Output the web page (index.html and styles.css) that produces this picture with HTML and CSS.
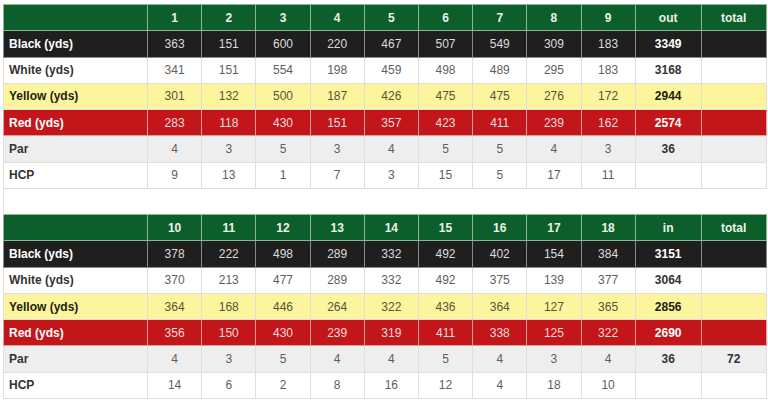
FILE: index.html
```html
<!DOCTYPE html>
<html>
<head>
<meta charset="utf-8">
<link rel="stylesheet" href="styles.css">
</head>
<body>
<table class="card">
<colgroup>
<col class="c-label"><col class="c-hole"><col class="c-hole"><col class="c-hole"><col class="c-hole"><col class="c-hole"><col class="c-hole"><col class="c-hole"><col class="c-hole"><col class="c-hole"><col class="c-sum"><col class="c-total">
</colgroup>
<tbody>
<tr class="head"><td></td><td>1</td><td>2</td><td>3</td><td>4</td><td>5</td><td>6</td><td>7</td><td>8</td><td>9</td><td>out</td><td>total</td></tr>
<tr class="black"><td>Black (yds)</td><td>363</td><td>151</td><td>600</td><td>220</td><td>467</td><td>507</td><td>549</td><td>309</td><td>183</td><td class="sum">3349</td><td></td></tr>
<tr class="white"><td>White (yds)</td><td>341</td><td>151</td><td>554</td><td>198</td><td>459</td><td>498</td><td>489</td><td>295</td><td>183</td><td class="sum">3168</td><td></td></tr>
<tr class="yellow"><td>Yellow (yds)</td><td>301</td><td>132</td><td>500</td><td>187</td><td>426</td><td>475</td><td>475</td><td>276</td><td>172</td><td class="sum">2944</td><td></td></tr>
<tr class="red"><td>Red (yds)</td><td>283</td><td>118</td><td>430</td><td>151</td><td>357</td><td>423</td><td>411</td><td>239</td><td>162</td><td class="sum">2574</td><td></td></tr>
<tr class="par"><td>Par</td><td>4</td><td>3</td><td>5</td><td>3</td><td>4</td><td>5</td><td>5</td><td>4</td><td>3</td><td class="sum">36</td><td></td></tr>
<tr class="hcp"><td>HCP</td><td>9</td><td>13</td><td>1</td><td>7</td><td>3</td><td>15</td><td>5</td><td>17</td><td>11</td><td></td><td></td></tr>
<tr class="gap"><td colspan="12"></td></tr>
<tr class="head"><td></td><td>10</td><td>11</td><td>12</td><td>13</td><td>14</td><td>15</td><td>16</td><td>17</td><td>18</td><td>in</td><td>total</td></tr>
<tr class="black"><td>Black (yds)</td><td>378</td><td>222</td><td>498</td><td>289</td><td>332</td><td>492</td><td>402</td><td>154</td><td>384</td><td class="sum">3151</td><td></td></tr>
<tr class="white"><td>White (yds)</td><td>370</td><td>213</td><td>477</td><td>289</td><td>332</td><td>492</td><td>375</td><td>139</td><td>377</td><td class="sum">3064</td><td></td></tr>
<tr class="yellow"><td>Yellow (yds)</td><td>364</td><td>168</td><td>446</td><td>264</td><td>322</td><td>436</td><td>364</td><td>127</td><td>365</td><td class="sum">2856</td><td></td></tr>
<tr class="red"><td>Red (yds)</td><td>356</td><td>150</td><td>430</td><td>239</td><td>319</td><td>411</td><td>338</td><td>125</td><td>322</td><td class="sum">2690</td><td></td></tr>
<tr class="par"><td>Par</td><td>4</td><td>3</td><td>5</td><td>4</td><td>4</td><td>5</td><td>4</td><td>3</td><td>4</td><td class="sum">36</td><td class="sum">72</td></tr>
<tr class="hcp"><td>HCP</td><td>14</td><td>6</td><td>2</td><td>8</td><td>16</td><td>12</td><td>4</td><td>18</td><td>10</td><td></td><td></td></tr>
</tbody>
</table>
</body>
</html>
```
FILE: styles.css
```css
html, body {
  margin: 0;
  padding: 0;
  background: #ffffff;
}
body {
  padding: 4px 0 0 3px;
  font-family: "Liberation Sans", Arial, sans-serif;
  font-size: 12px;
}
.card {
  border-collapse: collapse;
  table-layout: fixed;
  width: 763px;
}
.c-label { width: 144px; }
.c-hole { width: 54.2px; }
.c-sum { width: 66px; }
.c-total { width: 65px; }
.card td {
  height: 25.27px;
  padding: 0;
  border: 1px solid #dedede;
  text-align: center;
  vertical-align: middle;
  color: #5e5e5e;
  line-height: 14px;
}
.card td:first-child {
  text-align: left;
  padding-left: 5px;
  font-weight: bold;
  color: #333333;
}
.card td.sum {
  font-weight: bold;
  color: #333333;
}
.head td {
  background: #0c5f2a;
  color: #eaf3e6;
  font-weight: bold;
  border-color: #8fb795;
}
.black td {
  background: #1f1f1f;
  color: #dcdcdc;
  border-color: #8a8a8a;
}
.black td:first-child, .black td.sum { color: #ffffff; }
.yellow td {
  background: #fcf59e;
  color: #555533;
}
.yellow td:first-child, .yellow td.sum { color: #222211; }
.red td {
  background: #c3161a;
  color: #f6dada;
  border-color: #e49a9a;
}
.red td:first-child, .red td.sum { color: #ffffff; }
.par td { background: #eeeeee; }
.hcp td { background: #ffffff; }
.card .gap td {
  background: #ffffff;
  border-top: 1px solid #dedede;
  border-bottom: none;
  border-left: 1px solid #dedede;
  border-right: none;
}
```
